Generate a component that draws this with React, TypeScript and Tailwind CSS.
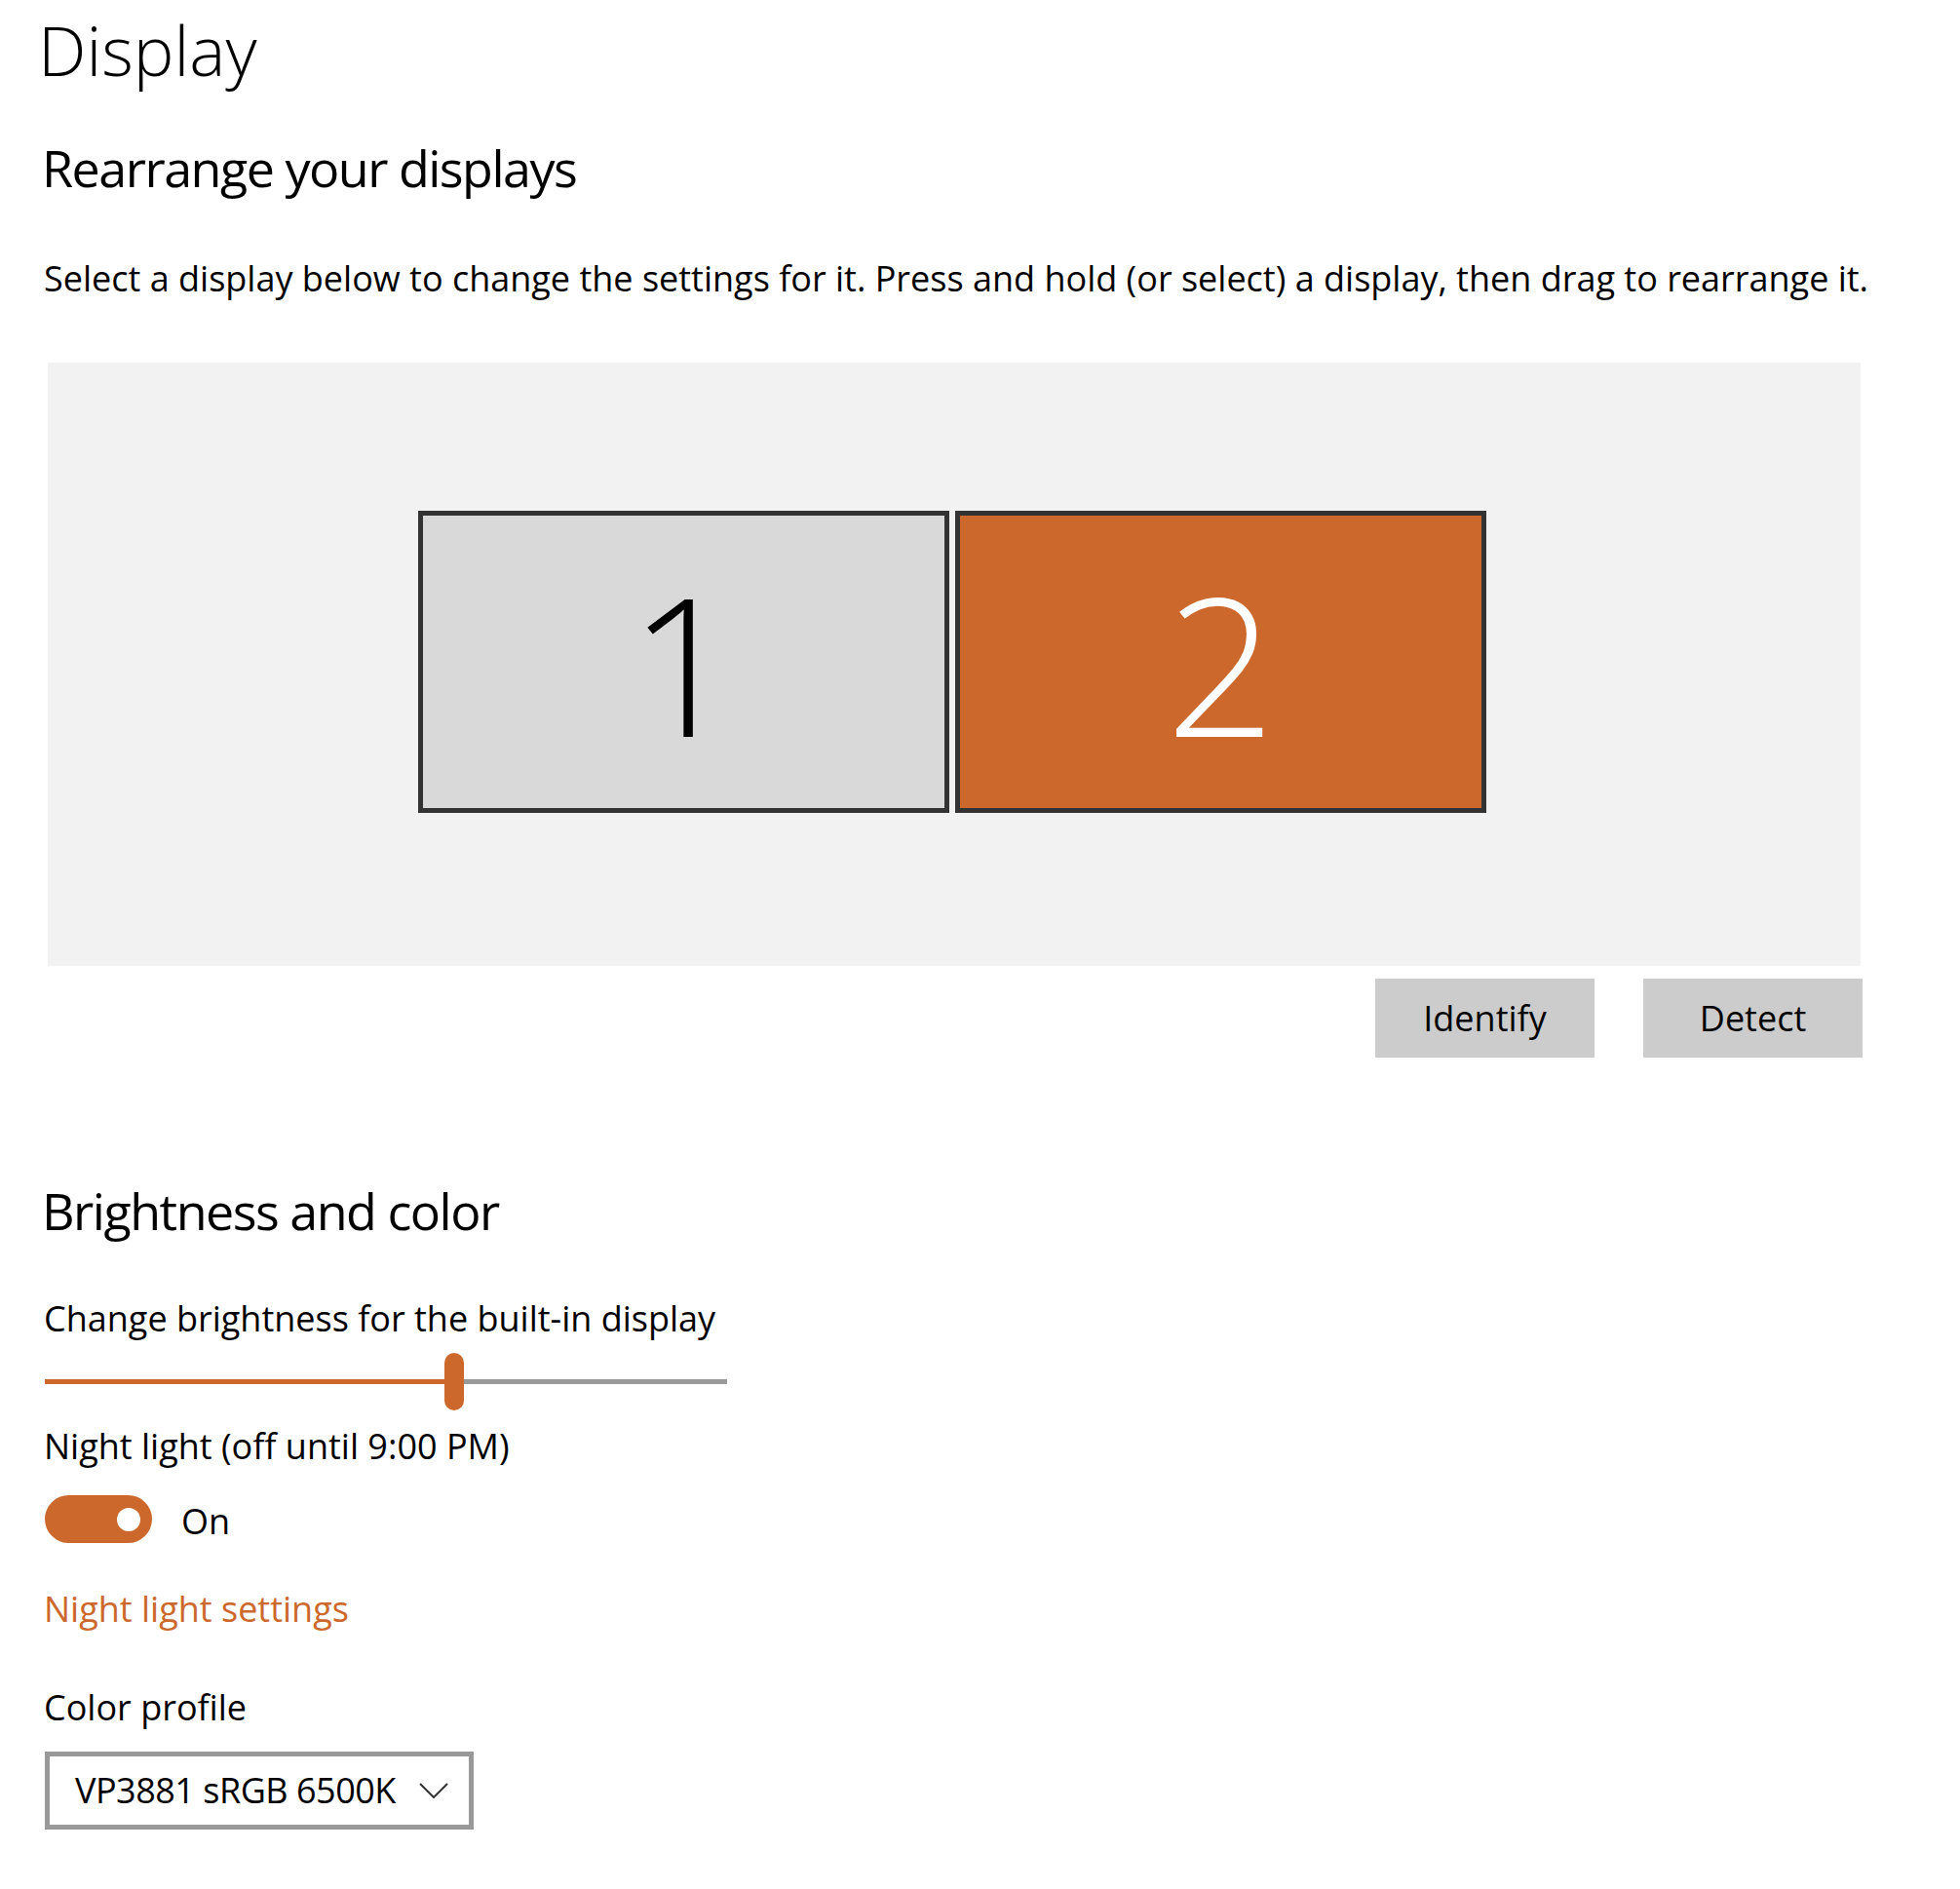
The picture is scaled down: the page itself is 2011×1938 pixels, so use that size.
import { useState } from "react"

const ORANGE = "#cc682b"

const Monitor = ({ n, active }: { n: number; active?: boolean }) => (
  <div
    className={
      "w-[545px] h-[310px] border-[5px] border-[#333] flex items-center justify-center " +
      (active ? "bg-[#cc682b] text-white" : "bg-[#d9d9d9] text-black")
    }
  >
    <span className="text-[197px] leading-none font-light">{n}</span>
  </div>
)

const App = () => {
  const [brightness] = useState(60)
  const [nightLight] = useState(true)

  return (
    <div className="min-h-screen bg-white text-black font-['Open_Sans',sans-serif] pl-[45px] pt-[1px]">
      <h1 className="text-[70px] leading-[100px] font-light -ml-[6px]">Display</h1>

      <h2 className="mt-[36px] text-[52px] leading-[70px] tracking-[-1.5px] -ml-[2px]">Rearrange your displays</h2>
      <p className="mt-[54px] text-[36px] leading-[50px]">
        Select a display below to change the settings for it. Press and hold (or select) a display, then drag to rearrange it.
      </p>

      {/* arrangement canvas */}
      <div className="mt-[61px] ml-[4px] w-[1860px] h-[619px] bg-[#f2f2f2] flex items-center justify-center">
        <div className="flex gap-[6px] -mt-[5px] -ml-[4px]">
          <Monitor n={1} />
          <Monitor n={2} active />
        </div>
      </div>

      <div className="mt-[13px] w-[1866px] flex justify-end gap-[50px]">
        <button className="w-[225px] h-[81px] bg-[#cccccc] text-[36px] leading-none">Identify</button>
        <button className="w-[225px] h-[81px] bg-[#cccccc] text-[36px] leading-none">Detect</button>
      </div>

      <h2 className="mt-[122px] text-[52px] leading-[70px] tracking-[-1.5px] -ml-[2px]">Brightness and color</h2>

      <p className="mt-[51px] text-[36px] leading-[50px]">Change brightness for the built-in display</p>

      {/* brightness slider */}
      <div className="mt-[10px] ml-[1px] relative w-[700px] h-[59px] flex items-center">
        <div className="h-[5px] w-full bg-[#999]" />
        <div className="absolute left-0 h-[5px] bg-[#cc682b]" style={{ width: `${brightness * 7}px` }} />
        <div
          className="absolute w-[20px] h-[59px] rounded-full bg-[#cc682b]"
          style={{ left: `${brightness * 7 - 10}px` }}
        />
      </div>

      <p className="mt-[12px] text-[36px] leading-[50px]">Night light (off until 9:00 PM)</p>

      <div className="mt-[25px] ml-[1px] flex items-start gap-[30px]">
        <div
          className="w-[110px] h-[49px] rounded-full flex items-center justify-end pr-[12px]"
          style={{ backgroundColor: nightLight ? ORANGE : "#999" }}
        >
          <div className="w-[24px] h-[24px] rounded-full bg-white" />
        </div>
        <span className="text-[36px] leading-[54px]">On</span>
      </div>

      <a className="block mt-[38px] text-[36px] leading-[50px] text-[#cc682b]">Night light settings</a>

      <p className="mt-[51px] text-[36px] leading-[50px]">Color profile</p>

      <div className="mt-[20px] ml-[1px] w-[440px] h-[80px] border-[5px] border-[#999] flex items-center pl-[26px] pr-[21px] justify-between">
        <span className="text-[36px] leading-[70px] tracking-[-0.5px]">VP3881 sRGB 6500K</span>
        <svg width="30" height="16" viewBox="0 0 30 16" fill="none">
          <polyline points="1,1 15,15 29,1" stroke="#333" strokeWidth="2" />
        </svg>
      </div>
    </div>
  )
}

export default App
